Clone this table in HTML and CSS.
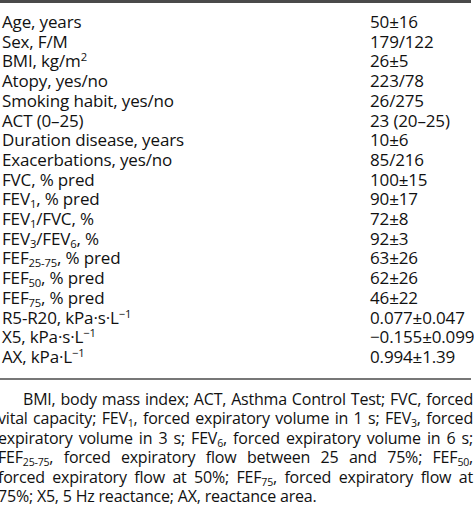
FILE: index.html
```html
<!DOCTYPE html>
<html>
<head>
<meta charset="utf-8">
<link rel="stylesheet" href="styles.css">
</head>
<body>
<div class="page">
  <div class="table">
    <div class="lbl">Age, years</div><div class="val">50±16</div>
    <div class="lbl">Sex, F/M</div><div class="val">179/122</div>
    <div class="lbl">BMI, kg/m<sup>2</sup></div><div class="val">26±5</div>
    <div class="lbl">Atopy, yes/no</div><div class="val">223/78</div>
    <div class="lbl">Smoking habit, yes/no</div><div class="val">26/275</div>
    <div class="lbl">ACT (0–25)</div><div class="val">23 (20–25)</div>
    <div class="lbl">Duration disease, years</div><div class="val">10±6</div>
    <div class="lbl">Exacerbations, yes/no</div><div class="val">85/216</div>
    <div class="lbl">FVC, % pred</div><div class="val">100±15</div>
    <div class="lbl">FEV<sub>1</sub>, % pred</div><div class="val">90±17</div>
    <div class="lbl">FEV<sub>1</sub>/FVC, %</div><div class="val">72±8</div>
    <div class="lbl">FEV<sub>3</sub>/FEV<sub>6</sub>, %</div><div class="val">92±3</div>
    <div class="lbl">FEF<sub>25-75</sub>, % pred</div><div class="val">63±26</div>
    <div class="lbl">FEF<sub>50</sub>, % pred</div><div class="val">62±26</div>
    <div class="lbl">FEF<sub>75</sub>, % pred</div><div class="val">46±22</div>
    <div class="lbl">R5-R20, kPa·s·L<sup>−1</sup></div><div class="val">0.077±0.047</div>
    <div class="lbl">X5, kPa·s·L<sup>−1</sup></div><div class="val">−0.155±0.099</div>
    <div class="lbl">AX, kPa·L<sup>−1</sup></div><div class="val">0.994±1.39</div>
  </div>
  <div class="notes">
    <span class="ln first">BMI, body mass index; ACT, Asthma Control Test; FVC, forced</span>
    <span class="ln">vital capacity; FEV<sub>1</sub>, forced expiratory volume in 1 s; FEV<sub>3</sub>, forced</span>
    <span class="ln">expiratory volume in 3 s; FEV<sub>6</sub>, forced expiratory volume in 6 s;</span>
    <span class="ln">FEF<sub>25-75</sub>, forced expiratory flow between 25 and 75%; FEF<sub>50</sub>,</span>
    <span class="ln">forced expiratory flow at 50%; FEF<sub>75</sub>, forced expiratory flow at</span>
    <span class="ln last">75%; X5, 5 Hz reactance; AX, reactance area.</span>
  </div>
</div>
</body>
</html>
```
FILE: styles.css
```css
html, body {
  margin: 0;
  padding: 0;
  background: #ffffff;
}
body {
  width: 474px;
  height: 505px;
  overflow: hidden;
  font-family: "Open Sans", "Noto Sans", sans-serif;
  font-size: 16px;
  color: #111111;
}
.page {
  width: 474px;
}
.table {
  display: grid;
  grid-template-columns: 368px auto;
  width: 471px;
  border-top: 3px solid #4a4a4a;
  border-bottom: 2px solid #777777;
  padding: 9px 0 11px 2px;
  box-sizing: border-box;
  font-size: 17px;
  line-height: 19.7px;
  letter-spacing: -0.15px;
}
.lbl, .val {
  white-space: nowrap;
}
sub, sup {
  font-size: 0.66em;
  line-height: 0;
}
sub { vertical-align: -0.25em; }
sup { vertical-align: 0.5em; }
.notes {
  margin: 10px 0 0 -2px;
  width: 475px;
  line-height: 19.5px;
  letter-spacing: -0.2px;
}
.ln {
  display: block;
  text-align: justify;
  text-align-last: justify;
  white-space: nowrap;
}
.ln.first {
  padding-left: 25px;
}
.ln.last {
  text-align-last: left;
}
```
